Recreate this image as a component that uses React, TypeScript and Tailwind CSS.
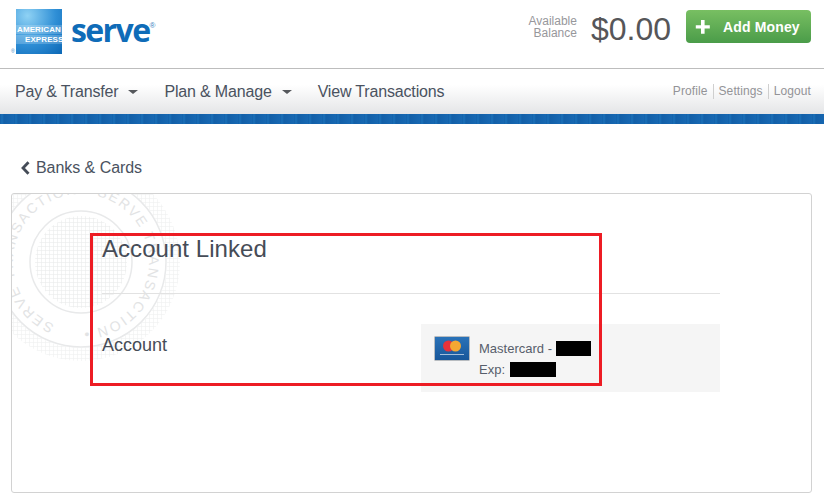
export default function App() {
  const hatchId = "hatch";
  return (
    <div className="relative w-[824px] h-[504px] overflow-hidden bg-white font-['Liberation_Sans',Arial,sans-serif]">
      <header className="h-[69px] border-b border-[#bdbdbd] flex items-start justify-between pl-[11px] pr-[13px]">
        <div className="flex items-start pt-[9px]">
          <div className="relative w-[51px] h-[45px] flex justify-end">
            <span className="absolute left-0 bottom-0 text-[5px] leading-[6px] text-[#3a7fc0]">®</span>
            <div className="w-[46px] h-[45px] bg-[radial-gradient(circle_at_25%_15%,#8fd2f4,#2f8fd6_55%,#0b67b5)] flex flex-col items-center justify-center gap-[1px] pt-[5px] text-white font-bold">
              <span className="block w-full bg-white/20 text-center text-[8px] leading-[9px] tracking-[0.1px]">AMERICAN</span>
              <span className="block w-full pl-[9px] bg-white/20 text-center text-[8px] leading-[9px] tracking-[0.1px]">EXPRESS</span>
            </div>
          </div>
          <div className="ml-[9px] mt-[1px] flex items-start">
            <span className="text-[#0f6cb8] text-[32px] leading-[40px] font-bold tracking-[-1.6px] font-['Open_Sans',sans-serif]">serve</span>
            <span className="text-[8px] leading-[8px] mt-[12px] text-[#3a7fc0]">®</span>
          </div>
        </div>
        <div className="flex items-start">
          <div className="mt-[15px] text-right text-[12px] leading-[12px] text-[#97979b]">
            <div>Available</div>
            <div>Balance</div>
          </div>
          <div className="ml-[14px] mt-[11px] text-[32px] leading-[37px] text-[#565659]">$0.00</div>
          <button className="ml-[15px] mt-[10px] w-[125px] h-[33px] rounded-[4px] bg-gradient-to-b from-[#78bf62] to-[#4a9c49] flex items-center text-white font-bold text-[14px] tracking-[0.15px]">
            <svg width="16" height="16" viewBox="0 0 16 16" className="ml-[9px]" aria-hidden="true">
              <path d="M6 1h3.600v5.200h5.200v3.400H9.600v5.200H6V9.600H.8V6.200H6z" fill="#fff" />
            </svg>
            <span className="ml-[12px] mt-[1px]">Add Money</span>
          </button>
        </div>
      </header>

      <nav className="h-[45px] bg-[linear-gradient(to_bottom,#ffffff_35%,#e4e5e7_100%)] flex items-start justify-between pl-[15px] pr-[13px]">
        <div className="flex items-center h-[46px] text-[16px] tracking-[-0.17px] text-[#4a5260]">
          <span>Pay &amp; Transfer</span>
          <span className="ml-[10px] mt-[-1px] w-0 h-0 border-x-[5px] border-x-transparent border-t-[4px] border-t-[#55585c]" />
          <span className="ml-[26px]">Plan &amp; Manage</span>
          <span className="ml-[10px] mt-[-1px] w-0 h-0 border-x-[5px] border-x-transparent border-t-[4px] border-t-[#55585c]" />
          <span className="ml-[26px]">View Transactions</span>
        </div>
        <div className="flex items-center h-[44px] text-[12px] tracking-[0.1px] text-[#939397]">
          <span className="pr-[5px] border-r border-[#cfcfcf] leading-[15px]">Profile</span>
          <span className="pl-[5px] pr-[5px] border-r border-[#cfcfcf] leading-[15px]">Settings</span>
          <span className="pl-[5px] leading-[15px]">Logout</span>
        </div>
      </nav>

      <div className="h-[10px] bg-[repeating-linear-gradient(90deg,#125fa8_0px,#1a70b8_2px,#125fa8_4px,#1768b2_14px)]" />

      <div className="pl-[21px] pt-[34px] h-[69px] flex items-start text-[16px] leading-[19px] tracking-[-0.05px] text-[#4a5260]">
        <svg width="10" height="14" viewBox="0 0 10 14" className="mt-[3px]" aria-hidden="true">
          <path d="M7.500 1.200 2 7l5.500 5.800" fill="none" stroke="#454c58" strokeWidth="2.800" />
        </svg>
        <span className="ml-[5px]">Banks &amp; Cards</span>
      </div>

      <main className="relative mx-[11px] w-[801px] h-[300px] border border-[#d2d2d2] rounded-[3px] overflow-hidden">
        <svg width="200" height="200" viewBox="0 0 200 200" className="absolute left-[-31px] top-[-32px]" aria-hidden="true">
          <defs>
            <pattern id={hatchId} width="4" height="4" patternUnits="userSpaceOnUse">
              <path d="M0 0H4M0 0V4" stroke="#e6e7e8" strokeWidth="1" />
            </pattern>
          </defs>
          <circle cx="100" cy="100" r="99" fill={`url(#${hatchId})`} opacity="0.75" />
          <circle cx="100" cy="100" r="86" fill="#fff" />
          <circle cx="100" cy="100" r="85" fill="none" stroke="#e8e9ea" strokeWidth="1.500" />
          <circle cx="100" cy="100" r="51" fill="none" stroke="#e8e9ea" strokeWidth="1.500" />
          <circle cx="100" cy="100" r="46" fill={`url(#${hatchId})`} />
          <path id="ring2" d="M100 168a68 68 0 1 1 .01 0" fill="none" />
          <g transform="rotate(23 100 100)">
            <text fontSize="14" fill="#e2e3e4" letterSpacing="1.900">
              <textPath href="#ring2">SERVE TRANSACTION • SERVE TRANSACTION •</textPath>
            </text>
          </g>
        </svg>

        <div className="relative ml-[90px] w-[618px] pt-[40px]">
          <h1 className="text-[24px] leading-[30px] tracking-[0.05px] text-[#464c57]">Account Linked</h1>
          <div className="mt-[29px] border-t border-[#e2e2e2]" />
          <div className="mt-[30px] flex items-start">
            <div className="w-[319px] pt-[11px] text-[18px] leading-[21px] text-[#464c57]">Account</div>
            <div className="w-[299px] h-[68px] bg-[#f5f5f5] flex items-start pl-[13px] pt-[12px]">
              <div className="w-[36px] h-[25px] rounded-[1px] border border-[#b8bcc0] bg-gradient-to-b from-[#2a72b8] to-[#18579a] flex flex-col items-center pt-[3px]">
                <svg width="22" height="12" viewBox="0 0 22 12" aria-hidden="true">
                  <circle cx="7.500" cy="6" r="5.500" fill="#e8323a" />
                  <circle cx="14.500" cy="6" r="5.500" fill="#f5a833" />
                </svg>
                <div className="mt-[2px] w-[24px] h-[1px] bg-white/60" />
              </div>
              <div className="ml-[9px] text-[13px] leading-[21px] text-[#575e6b] pt-[2px]">
                <div className="flex items-center">
                  Mastercard -
                  <span className="ml-[4px] w-[35px] h-[15px] bg-black" />
                </div>
                <div className="flex items-center">
                  Exp:
                  <span className="ml-[5px] w-[46px] h-[15px] bg-black" />
                </div>
              </div>
            </div>
          </div>
        </div>
      </main>

      <div className="absolute left-[90px] top-[233px] w-[512px] h-[153px] border-[3px] border-[#ed1c24]" />
    </div>
  );
}
